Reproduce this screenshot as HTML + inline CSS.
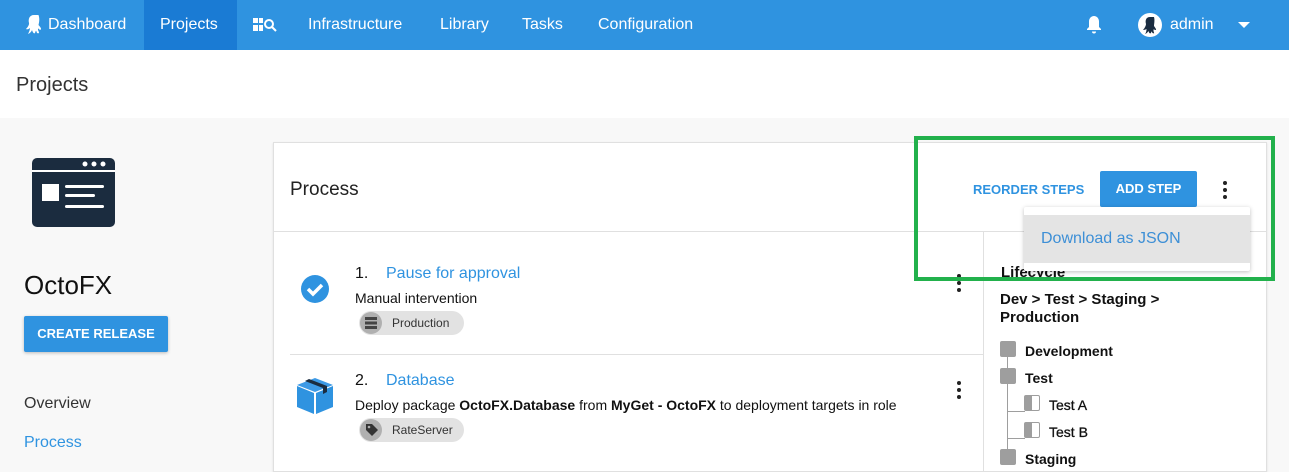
<!DOCTYPE html>
<html><head><style>
*{margin:0;padding:0;box-sizing:border-box}
body{width:1289px;height:461px;overflow:hidden;background:#f8f8f8;font-family:"Liberation Sans",Roboto,sans-serif;position:relative}
.a{position:absolute}
.nav{left:0;top:0;width:1289px;height:50px;background:#2f93e0;color:#fff;font-size:16px}
.nav span{position:absolute;top:16px}
.chip{position:absolute;height:24px;border-radius:12px;background:#e2e2e2;font-size:12px;color:#333;padding:5px 0 0 33px}
.chip i{position:absolute;left:1px;top:1px;width:22px;height:22px;border-radius:11px;background:#b0b0b0}
.dots{position:absolute;width:4px}
.dots b{display:block;width:4px;height:4px;border-radius:2px;background:#222;margin-bottom:3px}
.sq{position:absolute;width:16px;height:16px;background:#9e9e9e;border-radius:2px}
.lc{position:absolute;font-size:14px;font-weight:bold;color:#111}
</style></head><body>
<div class="a nav">
 <svg class="a" style="left:26px;top:15px" width="16" height="19" viewBox="0 0 16 19"><path d="M8 0C3.5 0 2 4 3 8 3.5 10 1 13 0 14 2 15 4 13 4 13 4 15 3 17 2 19 5 18 6 15 6 15 7 18 8 19 9 18 10 15 10 15 11 18 14 19 13 17 12 15 12 13 12 13 14 15 16 14 15 13 12.5 10 13 8 14 4 12.5 0 8 0Z" fill="#fff"/></svg>
 <span style="left:48px">Dashboard</span>
 <div class="a" style="left:144px;top:0;width:93px;height:50px;background:#1a7bd4"></div>
 <span style="left:160px">Projects</span>
 <svg class="a" style="left:253px;top:17px" width="24" height="16" viewBox="0 0 24 16"><rect x="0" y="1" width="5" height="5" fill="#fff"/><rect x="6" y="1" width="4" height="5" fill="#fff"/><rect x="0" y="8" width="5" height="6" fill="#fff"/><rect x="6" y="8" width="4" height="6" fill="#fff"/><circle cx="16" cy="7" r="4" stroke="#fff" stroke-width="2" fill="none"/><path d="M19 10l4 4" stroke="#fff" stroke-width="2"/></svg>
 <span style="left:308px">Infrastructure</span>
 <span style="left:440px">Library</span>
 <span style="left:522px">Tasks</span>
 <span style="left:598px">Configuration</span>
 <svg class="a" style="left:1086px;top:15px" width="16" height="19" viewBox="0 0 16 19"><path d="M8 1C5 1 3 3.5 3 6.5V12L1 14V15H15V14L13 12V6.5C13 3.5 11 1 8 1ZM6 16.5A2 2 0 0 0 10 16.5Z" fill="#fff"/></svg>
 <div class="a" style="left:1138px;top:13px;width:24px;height:24px;border-radius:12px;background:#fff"></div>
 <svg class="a" style="left:1142px;top:16px" width="16" height="19" viewBox="0 0 16 19"><path d="M8 1C4 1 3 4.5 4 8 4 10 2 13 1 14 3 14 4.5 13 4.5 13 4.5 15 4 17 3 18 5.5 17 6.5 15 6.5 15 7 17 8 18 9 17 9.5 15 9.5 15 10.5 17 13 18 12 17 11.5 15 11.5 13 11.5 13 13 14 15 14 14 13 12 10 12 8 13 4.5 12 1 8 1Z" fill="#1a2c40"/></svg>
 <span style="left:1170px">admin</span>
 <svg class="a" style="left:1238px;top:22px" width="12" height="7"><path d="M0 0h12L6 6z" fill="#fff"/></svg>
</div>
<div class="a" style="left:0;top:50px;width:1289px;height:68px;background:#fff"></div>
<div class="a" style="left:16px;top:74px;font-size:20px;color:#333">Projects</div>

<svg class="a" style="left:32px;top:158px" width="84" height="70" viewBox="0 0 84 70"><rect x="0" y="0" width="83" height="69" rx="5" fill="#1b2c3f"/><rect x="0" y="12" width="83" height="2" fill="#fff"/><circle cx="53" cy="6" r="2.5" fill="#fff"/><circle cx="62" cy="6" r="2.5" fill="#fff"/><circle cx="71" cy="6" r="2.5" fill="#fff"/><rect x="10" y="26" width="17" height="17" fill="#fff"/><rect x="33" y="27" width="39" height="3" rx="1.5" fill="#fff"/><rect x="33" y="36" width="30" height="3" rx="1.5" fill="#fff"/><rect x="33" y="47" width="39" height="3" rx="1.5" fill="#fff"/></svg>
<div class="a" style="left:24px;top:270px;font-size:26px;color:#111">OctoFX</div>
<div class="a" style="left:24px;top:316px;width:144px;height:36px;background:#2f93e0;border-radius:2px;box-shadow:0 1px 3px rgba(0,0,0,.25);color:#fff;font-size:13px;font-weight:bold;text-align:center;line-height:36px">CREATE RELEASE</div>
<div class="a" style="left:24px;top:395px;font-size:16px;color:#333">Overview</div>
<div class="a" style="left:24px;top:434px;font-size:16px;color:#2f93e0">Process</div>

<div class="a" style="left:273px;top:142px;width:994px;height:330px;background:#fff;border:1px solid #e0e0e0;box-shadow:0 1px 2px rgba(0,0,0,.1)"></div>
<div class="a" style="left:290px;top:179px;font-size:19px;color:#222">Process</div>
<div class="a" style="left:274px;top:231px;width:992px;height:1px;background:#e0e0e0"></div>
<div class="a" style="left:983px;top:232px;width:1px;height:240px;background:#e0e0e0"></div>
<div class="a" style="left:973px;top:182px;font-size:13px;font-weight:bold;color:#2f93e0">REORDER STEPS</div>
<div class="a" style="left:1100px;top:171px;width:97px;height:36px;background:#2f93e0;border-radius:2px;color:#fff;font-size:13px;font-weight:bold;text-align:center;line-height:36px">ADD STEP</div>
<div class="dots" style="left:1223px;top:181px"><b></b><b></b><b></b></div>

<svg class="a" style="left:300px;top:274px" width="30" height="30"><circle cx="15" cy="15" r="14" fill="#2f93e0"/><path d="M8 15l5 5 9-9" stroke="#fff" stroke-width="3.5" fill="none"/></svg>
<div class="a" style="left:355px;top:265px;font-size:16px;color:#111">1.</div>
<div class="a" style="left:386px;top:265px;font-size:16px;color:#2f93e0">Pause for approval</div>
<div class="a" style="left:355px;top:290px;font-size:14px;color:#111">Manual intervention</div>
<div class="chip" style="left:359px;top:311px;width:105px"><i></i>Production</div>
<svg class="a" style="left:365px;top:317px" width="12" height="12"><rect y="0" width="12" height="3" fill="#444"/><rect y="4.5" width="12" height="3" fill="#444"/><rect y="9" width="12" height="3" fill="#444"/></svg>
<div class="dots" style="left:957px;top:274px"><b></b><b></b><b></b></div>
<div class="a" style="left:290px;top:354px;width:693px;height:1px;background:#e0e0e0"></div>

<svg class="a" style="left:295px;top:377px" width="40" height="38" viewBox="0 0 40 38"><path d="M20 1L38 8 20 15 2 8Z" fill="#3d9ae6"/><path d="M2 9L19 16V37L2 30Z" fill="#2f93e0"/><path d="M21 16L38 9V30L21 37Z" fill="#2f93e0"/><path d="M10 4L28 11V17L32 15V9L14 2Z" fill="#1b2c3f"/></svg>
<div class="a" style="left:355px;top:372px;font-size:16px;color:#111">2.</div>
<div class="a" style="left:386px;top:372px;font-size:16px;color:#2f93e0">Database</div>
<div class="a" style="left:355px;top:397px;font-size:14px;color:#111">Deploy package <b>OctoFX.Database</b> from <b>MyGet - OctoFX</b> to deployment targets in role</div>
<div class="chip" style="left:359px;top:418px;width:105px"><i></i>RateServer</div>
<svg class="a" style="left:365px;top:423px" width="14" height="14"><path d="M1 1h6l6 6-6 6-6-6z" fill="#333"/><circle cx="4" cy="4" r="1.3" fill="#b0b0b0"/></svg>
<div class="dots" style="left:957px;top:381px"><b></b><b></b><b></b></div>

<div class="a" style="left:1001px;top:264px;font-size:15px;font-weight:bold;color:#111">Lifecycle</div>
<div class="lc" style="left:1000px;top:291px;font-size:15px;line-height:18px">Dev &gt; Test &gt; Staging &gt;<br>Production</div>
<div class="a" style="left:1007px;top:355px;width:1px;height:106px;background:#9e9e9e"></div>
<div class="a" style="left:1007px;top:411px;width:18px;height:1px;background:#9e9e9e"></div>
<div class="a" style="left:1007px;top:438px;width:18px;height:1px;background:#9e9e9e"></div>
<div class="sq" style="left:1000px;top:341px"></div><div class="lc" style="left:1025px;top:343px">Development</div>
<div class="sq" style="left:1000px;top:368px"></div><div class="lc" style="left:1025px;top:370px">Test</div>
<div class="a" style="left:1024px;top:395px;width:16px;height:16px;border:1px solid #9e9e9e;border-radius:2px;background:linear-gradient(90deg,#9e9e9e 50%,#fff 50%)"></div><div class="lc" style="left:1049px;top:397px;font-weight:normal;-webkit-text-stroke:0.3px #111">Test A</div>
<div class="a" style="left:1024px;top:422px;width:16px;height:16px;border:1px solid #9e9e9e;border-radius:2px;background:linear-gradient(90deg,#9e9e9e 50%,#fff 50%)"></div><div class="lc" style="left:1049px;top:424px;font-weight:normal;-webkit-text-stroke:0.3px #111">Test B</div>
<div class="sq" style="left:1000px;top:449px"></div><div class="lc" style="left:1025px;top:451px">Staging</div>

<div class="a" style="left:1024px;top:207px;width:226px;height:64px;background:#fff;border-radius:2px;box-shadow:0 1px 4px rgba(0,0,0,.25)"></div>
<div class="a" style="left:1024px;top:215px;width:226px;height:48px;background:#e4e4e4"></div>
<div class="a" style="left:1041px;top:230px;font-size:16px;color:#3d8fd6">Download as JSON</div>

<div class="a" style="left:914px;top:136px;width:361px;height:145px;border:4px solid #22b14c"></div>
</body></html>
